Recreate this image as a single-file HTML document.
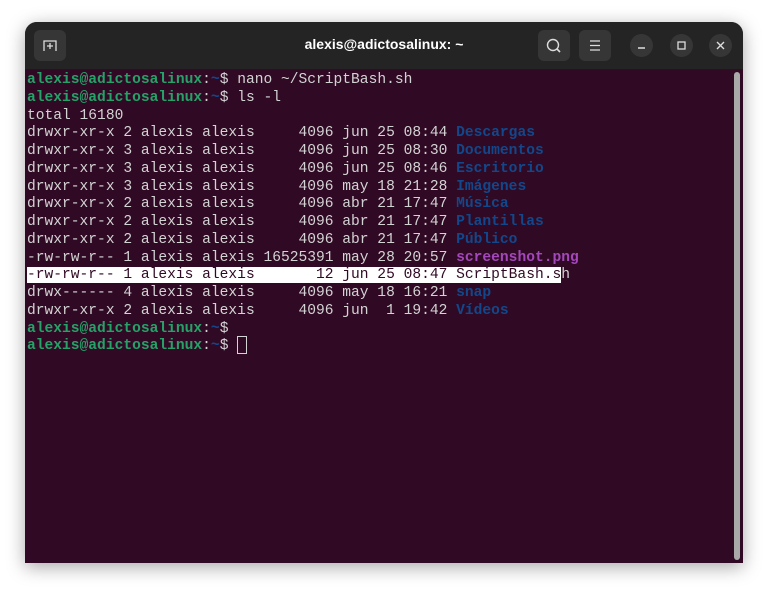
<!DOCTYPE html>
<html><head><meta charset="utf-8"><style>
html,body{margin:0;padding:0;width:768px;height:591px;background:#fff;overflow:hidden}
.win{position:absolute;left:25px;top:22px;width:718px;height:541px;background:#300a24;border-radius:12px 12px 0 0;overflow:hidden;box-shadow:0 4px 18px rgba(0,0,0,.35)}
.tb{position:absolute;left:0;top:0;width:718px;height:47px;background:#242424;border-bottom:1px solid #1a1a1a}
.title{position:absolute;left:0;right:0;top:14px;text-align:center;color:#fff;font:bold 14px "Liberation Sans",sans-serif}
.btn{position:absolute;top:8px;width:32px;height:31px;background:#363636;border-radius:6px}
.cb{position:absolute;top:12px;width:23px;height:23px;background:#363636;border-radius:50%}
.term{position:absolute;left:2px;top:50px;font:14.6px/17.75px "Liberation Mono",monospace;color:#d3d3d3;white-space:pre}
.g{color:#26a269;font-weight:bold}.b{color:#12488b;font-weight:bold}.p{color:#12488b;font-weight:bold}.m{color:#a347ba;font-weight:bold}
.hl{background:#fff;color:#300a24}
.cur{position:absolute;left:210px;top:264px;width:8px;height:16px;border:1px solid #d3d3d3}
.sb{position:absolute;left:709px;top:50px;width:6px;height:488px;background:#a9a9a9;border-radius:3px}
</style></head><body>
<div class="win">
<div class="tb">
<div class="btn" style="left:9px"><svg width="32" height="31"><path d="M10 21V11h12v10" fill="none" stroke="#ddd" stroke-width="1.3"/><path d="M16 13v6M13 16h6" stroke="#ddd" stroke-width="1.3"/></svg></div>
<div class="title">alexis@adictosalinux: ~</div>
<div class="btn" style="left:513px"><svg width="32" height="31"><circle cx="15" cy="15" r="5.5" fill="none" stroke="#ddd" stroke-width="1.4"/><path d="M19 19l3 3" stroke="#ddd" stroke-width="1.6"/></svg></div>
<div class="btn" style="left:554px"><svg width="32" height="31"><path d="M11 11h10M11 15.5h10M11 20h10" stroke="#ddd" stroke-width="1.3"/></svg></div>
<div class="cb" style="left:605px"><svg width="23" height="23"><path d="M8 14h7" stroke="#ddd" stroke-width="1.4"/></svg></div>
<div class="cb" style="left:645px"><svg width="23" height="23"><rect x="8" y="8" width="7" height="7" fill="none" stroke="#ddd" stroke-width="1.3"/></svg></div>
<div class="cb" style="left:684px"><svg width="23" height="23"><path d="M8 8l7 7M15 8l-7 7" stroke="#ddd" stroke-width="1.4"/></svg></div>
</div>
<div class="term"><span class="g">alexis@adictosalinux</span>:<span class="p">~</span>$ nano ~/ScriptBash.sh
<span class="g">alexis@adictosalinux</span>:<span class="p">~</span>$ ls -l
total 16180
drwxr-xr-x 2 alexis alexis     4096 jun 25 08:44 <span class="b">Descargas</span>
drwxr-xr-x 3 alexis alexis     4096 jun 25 08:30 <span class="b">Documentos</span>
drwxr-xr-x 3 alexis alexis     4096 jun 25 08:46 <span class="b">Escritorio</span>
drwxr-xr-x 3 alexis alexis     4096 may 18 21:28 <span class="b">Imágenes</span>
drwxr-xr-x 2 alexis alexis     4096 abr 21 17:47 <span class="b">Música</span>
drwxr-xr-x 2 alexis alexis     4096 abr 21 17:47 <span class="b">Plantillas</span>
drwxr-xr-x 2 alexis alexis     4096 abr 21 17:47 <span class="b">Público</span>
-rw-rw-r-- 1 alexis alexis 16525391 may 28 20:57 <span class="m">screenshot.png</span>
<span class="hl">-rw-rw-r-- 1 alexis alexis       12 jun 25 08:47 ScriptBash.s</span>h
drwx------ 4 alexis alexis     4096 may 18 16:21 <span class="b">snap</span>
drwxr-xr-x 2 alexis alexis     4096 jun  1 19:42 <span class="b">Vídeos</span>
<span class="g">alexis@adictosalinux</span>:<span class="p">~</span>$
<span class="g">alexis@adictosalinux</span>:<span class="p">~</span>$ <span class="cur"></span></div>
<div class="sb"></div>
</div>
</body></html>
